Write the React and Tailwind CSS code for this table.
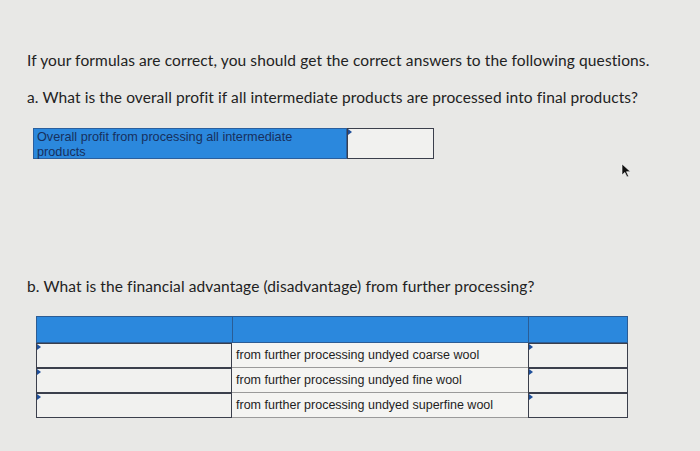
import React from 'react';

// blue row label + answer grid, as in the worksheet screenshot
const rows = [
  'from further processing undyed coarse wool',
  'from further processing undyed fine wool',
  'from further processing undyed superfine wool',
];

const Marker = () => (
  <span className="absolute left-0 top-0 w-0 h-0 border-y-[3px] border-y-transparent border-l-[4px] border-l-[#1f4f9a]" />
);

const InputCell = ({ className = '' }) => (
  <div className={`relative bg-[#f1f1ef] border-[1.5px] border-[#3b3f4c] ${className}`}>
    <Marker />
  </div>
);

const App = () => {
  return (
    <div className="relative w-[700px] h-[451px] overflow-hidden bg-[#e8e8e6] font-['Lato',sans-serif] text-[#222]">
      <div className="pt-[49px] pl-[27px]">
        <p className="text-[15.5px] leading-[22px] tracking-[0.1px]">
          If your formulas are correct, you should get the correct answers to the following questions.
        </p>
        <p className="mt-[15px] text-[15.5px] leading-[22px] tracking-[0.1px]">
          a. What is the overall profit if all intermediate products are processed into final products?
        </p>
      </div>

      <div className="mt-[20px] ml-[33px] flex h-[31px] w-[401px]">
        <div className="w-[314px] bg-[#2b88dd] border border-[#2a5f9e] px-[3px] pt-px font-['Liberation_Sans',sans-serif] text-[12.7px] leading-[15px] text-[#17305e]">
          Overall profit from processing all intermediate
          <br />
          products
        </div>
        <InputCell className="flex-1" />
      </div>

      <p className="mt-[116px] ml-[27px] text-[15.5px] leading-[22px] tracking-[0.1px]">
        b. What is the financial advantage (disadvantage) from further processing?
      </p>

      <div className="mt-[19px] ml-[36px] w-[592px] font-['Liberation_Sans',sans-serif] text-[12.5px] text-[#1e1e1e]">
        <div className="grid grid-cols-[196px_296px_100px] h-[27px] bg-[#2b88dd] border border-[#2c5c94]">
          <div className="border-r border-[#2a5d96]" />
          <div className="border-r border-[#2a5d96]" />
          <div />
        </div>
        {rows.map((label) => (
          <div key={label} className="grid grid-cols-[196px_296px_100px] h-[25px]">
            <InputCell />
            <div className="bg-[#f4f4f2] border-b border-[#9a9a9a] pl-[4px] flex items-center leading-none">
              {label}
            </div>
            <InputCell />
          </div>
        ))}
      </div>

      {/* mouse pointer */}
      <svg className="absolute left-[621px] top-[163px]" width="11" height="15" viewBox="0 0 11 15">
        <path d="M1 1 L1 12 L3.8 9.4 L6 14 L7.6 13.2 L5.5 8.7 L9.5 8.7 Z" fill="#111" stroke="#fff" strokeWidth="0.6" />
      </svg>
    </div>
  );
};

export default App;
